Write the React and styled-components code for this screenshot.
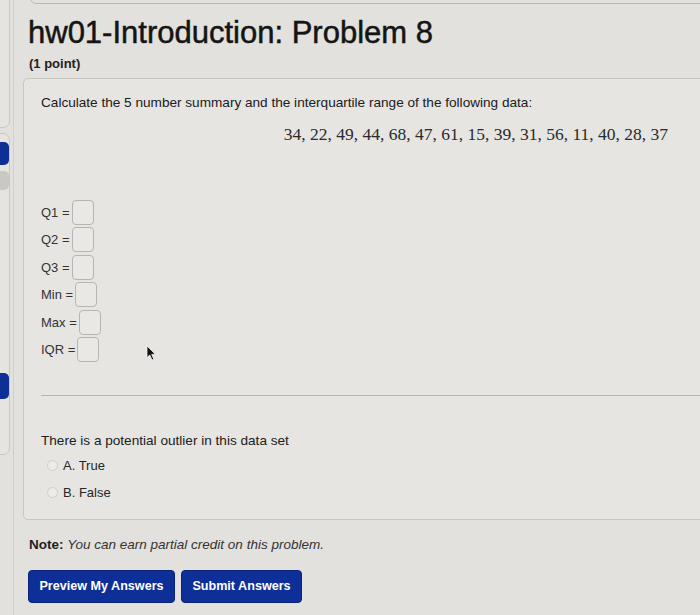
import React from 'react';
import styled, { createGlobalStyle } from 'styled-components';

const Global = createGlobalStyle`
  html, body {
    margin: 0;
    padding: 0;
    background: #e2e1dd;
    overflow: hidden;
  }
  body {
    font-family: "Liberation Sans", Arial, sans-serif;
    color: #1f1f1f;
  }
`;

const rows = [
  { label: 'Q1' },
  { label: 'Q2' },
  { label: 'Q3' },
  { label: 'Min' },
  { label: 'Max' },
  { label: 'IQR' },
];

const data = [34, 22, 49, 44, 68, 47, 61, 15, 39, 31, 56, 11, 40, 28, 37];

const App = () => {
  return (
    <>
      <Global />
      <Page>
        <Sidebar>
          <SidePanel $h={138} $top={-10} />
          <SidePanel $h={322} $top={5}>
            <SidePill $color="#0d2f96" $top={8} $h={23} />
            <SidePill $color="#c9c8c4" $top={6} $h={19} />
            <SidePill $color="#0d2f96" $top={183} $h={26} />
          </SidePanel>
        </Sidebar>
        <Main>
          <TopBox />
          <Title>hw01-Introduction: Problem 8</Title>
          <Points>(1 point)</Points>
          <Card>
            <Prompt>Calculate the 5 number summary and the interquartile range of the following data:</Prompt>
            <DataLine>{data.join(', ')}</DataLine>
            <Answers>
              {rows.map((r) => (
                <AnswerRow key={r.label}>
                  <AnswerLabel>{r.label} =</AnswerLabel>
                  <AnswerBox />
                </AnswerRow>
              ))}
              <Cursor width="10" height="16" viewBox="0 0 10 16">
                <path d="M1 1 L1 12.5 L3.8 10 L6 15 L7.8 14.2 L5.7 9.4 L9.3 9.2 Z" fill="#111" stroke="#f4f4f4" strokeWidth="0.8" />
              </Cursor>
            </Answers>
            <Separator />
            <Question>There is a potential outlier in this data set</Question>
            <Options>
              <Option>
                <Radio />
                <span>A. True</span>
              </Option>
              <Option>
                <Radio />
                <span>B. False</span>
              </Option>
            </Options>
          </Card>
          <Note>
            <b>Note:</b> <i>You can earn partial credit on this problem.</i>
          </Note>
          <Buttons>
            <Button $w={147}>Preview My Answers</Button>
            <Button $w={121}>Submit Answers</Button>
          </Buttons>
        </Main>
      </Page>
    </>
  );
};

export default App;

const Page = styled.div`
  display: flex;
  width: 700px;
  height: 615px;
  overflow: hidden;
`;

const Sidebar = styled.div`
  width: 13px;
  flex: none;
  display: flex;
  flex-direction: column;
  overflow: hidden;
`;

const SidePanel = styled.div`
  margin-top: ${(p) => p.$top}px;
  margin-left: -30px;
  width: 40px;
  height: ${(p) => p.$h}px;
  box-sizing: border-box;
  border: 1px solid #c8c7c3;
  border-radius: 7px;
  background: #e5e4e0;
  display: flex;
  flex-direction: column;
  padding-left: 20px;
`;

const SidePill = styled.div`
  margin-top: ${(p) => p.$top}px;
  height: ${(p) => p.$h}px;
  width: 18px;
  background: ${(p) => p.$color};
  border-radius: 5px;
`;

const Main = styled.div`
  flex: 1;
  border-left: 1px solid #d0cfcb;
  padding-left: 9px;
  display: flex;
  flex-direction: column;
`;

const TopBox = styled.div`
  margin-top: -12px;
  margin-left: 7px;
  margin-right: -20px;
  height: 14px;
  border: 1px solid #b9b8b4;
  border-radius: 6px;
`;

const Title = styled.h1`
  margin: 11px 0 0 5px;
  font-size: 31px;
  line-height: 36px;
  font-weight: 400;
  color: #141414;
  -webkit-text-stroke: 0.5px #141414;
`;

const Points = styled.div`
  margin: 5px 0 0 6px;
  font-size: 13px;
  font-weight: 700;
  line-height: 16px;
  color: #222;
`;

const Card = styled.section`
  margin-top: 6px;
  margin-right: -20px;
  background: #e6e5e1;
  border: 1px solid #c6c5c1;
  border-radius: 5px;
  padding: 15px 0 17px 17px;
  display: flex;
  flex-direction: column;
`;

const Prompt = styled.p`
  margin: 0;
  font-size: 13.6px;
  line-height: 18px;
  color: #202020;
`;

const DataLine = styled.div`
  margin-top: 11px;
  padding-right: 51px;
  text-align: right;
  font-family: "Liberation Serif", "Times New Roman", serif;
  font-size: 17.5px;
  line-height: 22px;
  color: #2a2a2a;
`;

const Answers = styled.div`
  position: relative;
  margin-top: 55px;
  display: flex;
  flex-direction: column;
  gap: 2.4px;
`;

const AnswerRow = styled.div`
  display: flex;
  align-items: center;
  gap: 2px;
  height: 25px;
`;

const AnswerLabel = styled.span`
  font-size: 13px;
  color: #333;
`;

const AnswerBox = styled.div`
  width: 20px;
  height: 23px;
  border: 1.5px solid #b6b5b1;
  border-radius: 4px;
  background: #e9e8e4;
`;

const Cursor = styled.svg`
  position: absolute;
  left: 105px;
  top: 145px;
`;

const Separator = styled.hr`
  margin: 33px 0 0 0;
  border: none;
  border-top: 1.5px solid #b7b6b2;
`;

const Question = styled.p`
  margin: 36px 0 0 0;
  font-size: 13.6px;
  line-height: 18px;
  color: #202020;
`;

const Options = styled.div`
  margin-top: 7px;
  display: flex;
  flex-direction: column;
  gap: 9px;
`;

const Option = styled.label`
  display: flex;
  align-items: center;
  gap: 5px;
  padding-left: 6px;
  height: 18px;
  font-size: 13px;
  color: #262626;
`;

const Radio = styled.span`
  width: 9px;
  height: 9px;
  border-radius: 50%;
  border: 1px solid #cfcecb;
  background: #ecebe8;
`;

const Note = styled.p`
  margin: 16px 0 0 6px;
  font-size: 13.5px;
  line-height: 18px;
  color: #1f1f1f;
  b {
    font-weight: 700;
  }
  i {
    color: #333;
  }
`;

const Buttons = styled.div`
  margin: 16px 0 0 5px;
  display: flex;
  gap: 6px;
`;

const Button = styled.button`
  width: ${(p) => p.$w}px;
  height: 33px;
  padding: 0;
  border: 1px solid #08247a;
  border-radius: 4px;
  background: #0e2f97;
  color: #fff;
  font-family: "Liberation Sans", Arial, sans-serif;
  font-size: 12.6px;
  font-weight: 700;
  cursor: pointer;
`;
